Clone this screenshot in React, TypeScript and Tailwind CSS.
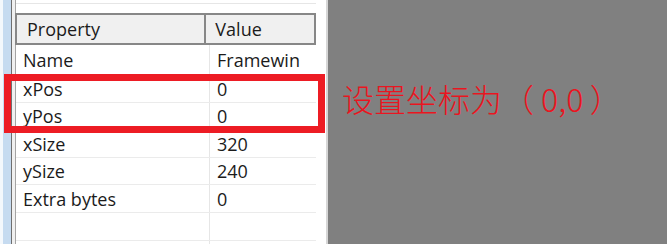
import React from "react";

const rows: { name: string; value: string; h: string }[] = [
  { name: "Name", value: "Framewin", h: "h-[30px]" },
  { name: "xPos", value: "0", h: "h-[28px]" },
  { name: "yPos", value: "0", h: "h-[27px]" },
  { name: "xSize", value: "320", h: "h-[28px]" },
  { name: "ySize", value: "240", h: "h-[27px]" },
  { name: "Extra bytes", value: "0", h: "h-[28px]" },
  { name: "", value: "", h: "h-[28px]" },
  { name: "", value: "", h: "h-[28px]" },
];

export default function App() {
  return (
    <div
      className="relative w-[667px] h-[244px] flex overflow-hidden text-[#1b1b1b]"
      style={{ fontFamily: '"Open Sans", "Noto Sans", sans-serif' }}
    >
      {/* left property panel */}
      <div className="w-[328px] h-full flex bg-white shrink-0">
        <div className="w-[3px] h-full bg-[#f4f8fc]" />
        <div className="w-[8px] h-full bg-[#c6dbf0]" />
        <div className="w-[1px] h-full bg-[#6f6f6f]" />
        <div className="w-[3px] h-full bg-[#f0f0f0]" />
        <div className="w-[301px] h-full flex flex-col border-l border-[#a3a3a3] bg-white">
          <div className="h-[13px] shrink-0 bg-white">
            <div className="mt-[3px] h-px bg-[#e6e6e6]" />
          </div>
          {/* header */}
          <div className="flex h-[32px] shrink-0 text-[18px] leading-none">
            <div className="w-[192px] -ml-px flex items-center pl-[10px] bg-[#f0f0f0] border-2 border-[#878787]">
              Property
            </div>
            <div className="w-[110px] flex items-center pl-[9px] bg-[#f0f0f0] border-2 border-l-0 border-[#878787]">
              Value
            </div>
          </div>
          {/* rows */}
          {rows.map((r, i) => (
            <div
              key={i}
              className={`flex ${r.h} shrink-0 border-b border-[#ebebeb] text-[18px] leading-none`}
            >
              <div className="w-[194px] flex items-center pl-[7px] border-r border-[#e6e6e6] whitespace-nowrap">
                {r.name}
              </div>
              <div className="flex-1 flex items-center pl-[7px] whitespace-nowrap">
                {r.value}
              </div>
            </div>
          ))}
        </div>
        <div className="w-[10px] h-full bg-white" />
        <div className="w-[2px] h-full bg-[#d6d6d6]" />
      </div>

      {/* gray canvas with annotation */}
      <div className="flex-1 h-full bg-[#808080] pl-[14px] pt-[82px]">
        <div
          className="text-[32px] leading-none text-[#ea1520] whitespace-nowrap"
          style={{ fontFamily: '"Noto Sans CJK SC", "Noto Sans", sans-serif', fontWeight: 300 }}
        >
          设置坐标为（ 0,0&thinsp;）
        </div>
      </div>

      {/* red highlight box */}
      <div className="absolute left-[4px] top-[74px] w-[321px] h-[59px] border-[7px] border-[#ed1c24] pointer-events-none" />
    </div>
  );
}
